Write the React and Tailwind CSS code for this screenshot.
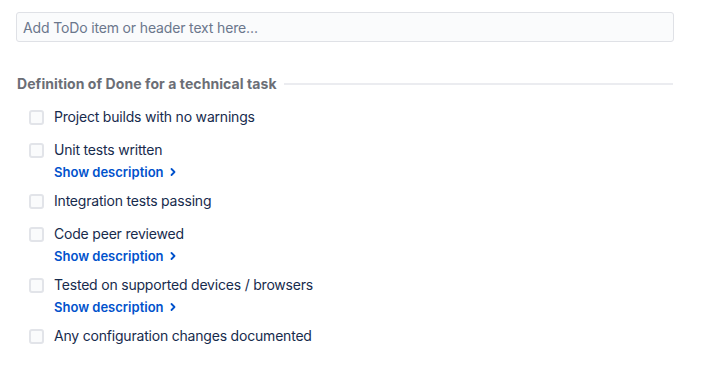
import React, { useState } from "react";

const items = [
  { label: "Project builds with no warnings" },
  { label: "Unit tests written", desc: true },
  { label: "Integration tests passing" },
  { label: "Code peer reviewed", desc: true },
  { label: "Tested on supported devices / browsers", desc: true },
  { label: "Any configuration changes documented" },
];

const Chevron = () => (
  <svg width="8" height="10" viewBox="0 0 8 10" className="ml-[5px]">
    <path d="M2.5 2l3 3-3 3" fill="none" stroke="currentColor" strokeWidth="1.8" strokeLinecap="round" strokeLinejoin="round" />
  </svg>
);

export default function App() {
  const [text, setText] = useState("");
  const [checked, setChecked] = useState({});

  return (
    <div className="w-[704px] h-[368px] bg-white pl-4 pt-3 font-['Inter','Noto_Sans',sans-serif] text-[14px]">
      {/* add item input */}
      <input
        type="text"
        value={text}
        onChange={(e) => setText(e.target.value)}
        placeholder="Add ToDo item or header text here..."
        className="w-[658px] h-[30px] px-[6px] rounded-[3px] border-[1.5px] border-[#dfe1e6] bg-[#fafbfc] text-[14px] tracking-[-0.15px] text-[#172b4d] placeholder:text-[#6b778c] outline-none"
      />

      {/* header */}
      <div className="flex items-center w-[657px] mt-[32px] mb-[13px]">
        <span className="font-bold text-[#6b6e76] leading-5 pl-[1px] tracking-[0.08px]">
          Definition of Done for a technical task
        </span>
        <div className="flex-1 h-[2px] bg-[#ebecf0] ml-[7px]" />
      </div>

      {/* checklist */}
      <div className="flex flex-col">
        {items.map((it, i) => (
          <div key={i} className={it.desc ? "pb-[10px]" : "pb-[13px]"}>
            <div className="flex items-center">
              <button
                type="button"
                onClick={() => setChecked({ ...checked, [i]: !checked[i] })}
                className="ml-[13px] w-[15px] h-[15px] rounded-[3px] border-2 border-[#e2e4e9] bg-[#fafbfc]"
              />
              <span className="ml-[10px] leading-5 tracking-[-0.2px] text-[#172b4d]">{it.label}</span>
            </div>
            {it.desc && (
              <button
                type="button"
                className="ml-[38px] mt-[3px] flex items-center leading-[18px] text-[13px] font-semibold text-[#0052cc]"
              >
                Show description
                <Chevron />
              </button>
            )}
          </div>
        ))}
      </div>
    </div>
  );
}
